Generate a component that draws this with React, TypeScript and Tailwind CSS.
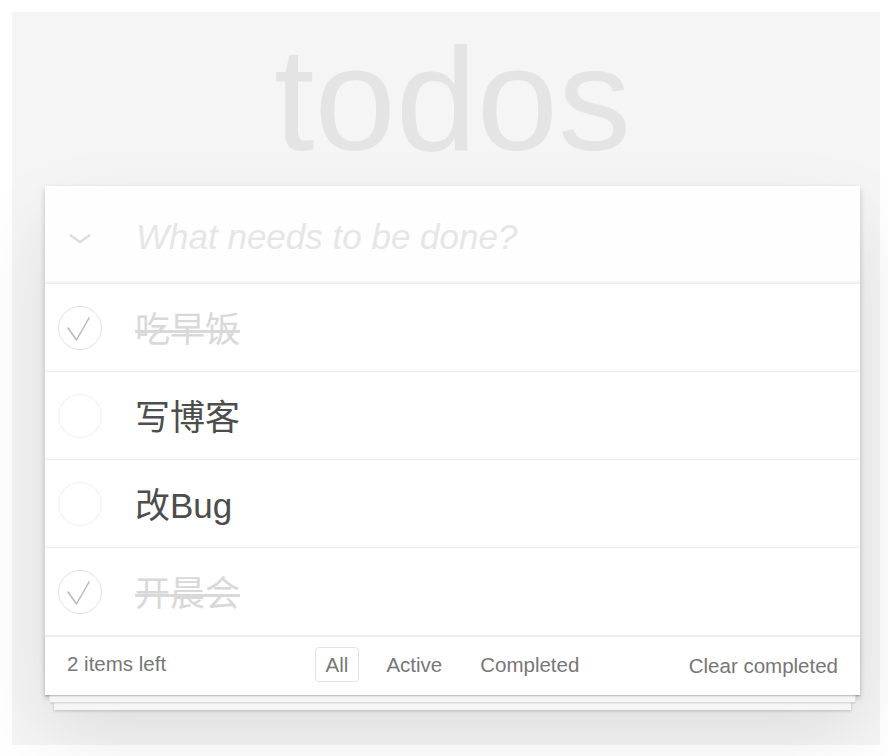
import { useState } from "react";

type Todo = { id: number; title: string; completed: boolean };

const initialTodos: Todo[] = [
  { id: 1, title: "吃早饭", completed: true },
  { id: 2, title: "写博客", completed: false },
  { id: 3, title: "改Bug", completed: false },
  { id: 4, title: "开晨会", completed: true },
];

const FONT = {
  fontFamily: '"Liberation Sans", "Noto Sans CJK SC", Arial, sans-serif',
};

function CheckCircle({ checked, onClick }: { checked: boolean; onClick: () => void }) {
  return (
    <button
      onClick={onClick}
      className={`ml-[13px] flex h-[44px] w-[44px] shrink-0 items-center justify-center rounded-full border ${
        checked ? "border-[#e2e2e2]" : "border-[#f0f0f0]"
      }`}
    >
      {checked && (
        <svg width="42" height="42" viewBox="1 1 42 42" fill="none">
          <path
            d="M10 22 L18.5 34 L31 12"
            stroke="#b8b8b8"
            strokeWidth="1.5"
            strokeLinecap="round"
            strokeLinejoin="round"
          />
        </svg>
      )}
    </button>
  );
}

export default function App() {
  const [todos, setTodos] = useState<Todo[]>(initialTodos);
  const [filter, setFilter] = useState("All");
  const [newTodo, setNewTodo] = useState("");

  const left = todos.filter((t) => !t.completed).length;

  const toggle = (id: number) =>
    setTodos(todos.map((t) => (t.id === id ? { ...t, completed: !t.completed } : t)));

  const visible = todos.filter((t) =>
    filter === "Active" ? !t.completed : filter === "Completed" ? t.completed : true
  );

  return (
    <div className="h-[756px] bg-white pl-[12px] pr-[8px] pt-[12px]" style={FONT}>
      <div className="h-[733px] bg-[#f5f5f5] pt-[14px]">
        <div className="ml-[33px] w-[815px]">
          {/* Title */}
          <h1 className="h-[148px] text-center text-[146px] font-thin leading-[148px] text-[#e4e4e4]">
            todos
          </h1>

          {/* Card */}
          <section className="mt-[12px] bg-white shadow-[0_3px_6px_0_rgba(0,0,0,0.2),0_37px_74px_0_rgba(0,0,0,0.1)]">
            <div className="flex h-[98px] items-center border-b border-[#ededed] bg-[#fefefe] pt-[6px] shadow-[inset_0_-2px_1px_rgba(0,0,0,0.03)]">
              <span className="flex w-[70px] justify-center pt-[2px]">
                <svg width="24" height="12" viewBox="0 0 24 12" fill="none">
                  <path d="M2 2 L12 9 L22 2" stroke="#dcdcdc" strokeWidth="2.4" strokeLinejoin="round" />
                </svg>
              </span>
              <input
                value={newTodo}
                onChange={(e) => setNewTodo(e.target.value)}
                onKeyDown={(e) => {
                  if (e.key === "Enter" && newTodo.trim()) {
                    setTodos([...todos, { id: Date.now(), title: newTodo.trim(), completed: false }]);
                    setNewTodo("");
                  }
                }}
                placeholder="What needs to be done?"
                className="ml-[21px] flex-1 bg-transparent text-[35px] text-[#4d4d4d] outline-none placeholder:font-light placeholder:italic placeholder:text-[#e6e6e6]"
                style={FONT}
              />
            </div>

            <ul>
              {visible.map((todo) => (
                <li key={todo.id} className="flex h-[88px] items-center border-b border-[#ededed]">
                  <CheckCircle checked={todo.completed} onClick={() => toggle(todo.id)} />
                  <label
                    className={`ml-[33px] pt-[5px] text-[35px] leading-[42px] ${
                      todo.completed ? "text-[#d9d9d9] line-through" : "text-[#4d4d4d]"
                    }`}
                  >
                    {todo.title}
                  </label>
                </li>
              ))}
            </ul>

            {/* Footer */}
            <footer className="grid h-[59px] grid-cols-[1fr_auto_1fr] items-center border-t border-[#ececec] px-[22px] text-[20.5px] text-[#777] shadow-[0_1.5px_1.5px_rgba(0,0,0,0.2),0_12px_0_-4.5px_#f6f6f6,0_13px_1.5px_-4.5px_rgba(0,0,0,0.2),0_24px_0_-9px_#f6f6f6,0_25px_3px_-9px_rgba(0,0,0,0.2)]">
              <span className="pb-[3px]">{left} items left</span>
              <ul className="flex gap-[16px] pb-[3px]">
                {["All", "Active", "Completed"].map((f) => (
                  <li key={f}>
                    <button
                      onClick={() => setFilter(f)}
                      className={`rounded-[4px] border px-[10px] py-[3px] leading-[27px] ${
                        filter === f ? "border-[#e3e3e3]" : "border-transparent"
                      }`}
                    >
                      {f}
                    </button>
                  </li>
                ))}
              </ul>
              <button
                onClick={() => setTodos(todos.filter((t) => !t.completed))}
                className="justify-self-end"
              >
                Clear completed
              </button>
            </footer>
          </section>
        </div>
      </div>
    </div>
  );
}
